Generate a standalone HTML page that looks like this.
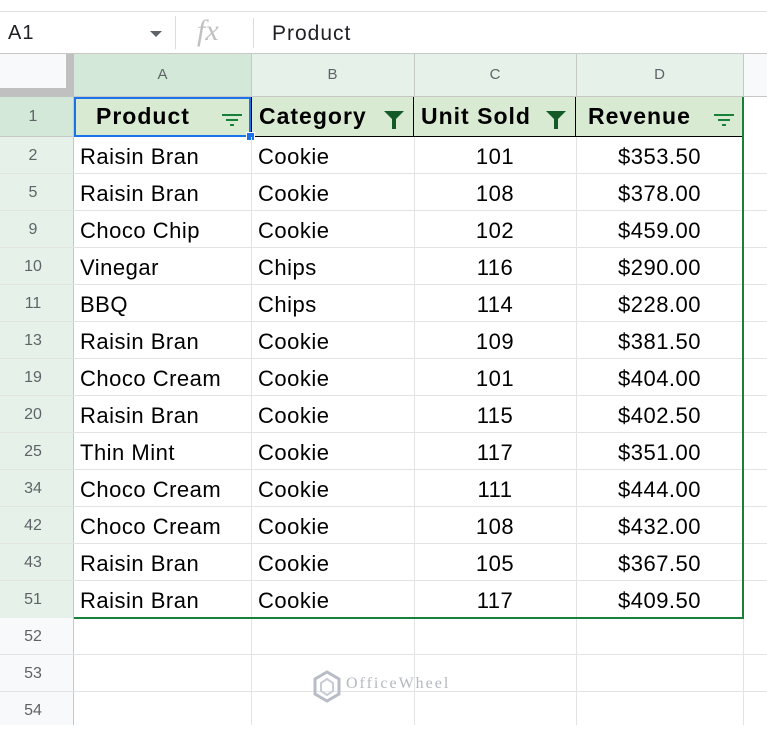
<!DOCTYPE html>
<html><head><meta charset="utf-8"><style>
body{margin:0;width:767px;height:725px;overflow:hidden;background:#fff;font-family:"Liberation Sans",Arial,sans-serif;position:relative}
div{position:absolute;box-sizing:border-box}
.h{height:1px;background:#e2e3e3}
.v{width:1px;background:#e2e3e3}
.t{font-size:22px;color:#000;white-space:nowrap;line-height:37px;letter-spacing:0.5px;margin-top:1px}
.rn{font-size:16px;color:#5f6368;width:66px;text-align:center;line-height:37px}
.cl{font-size:15px;color:#5f6368;text-align:center;top:54px;height:42px;line-height:42px}
.hd{font-size:23px;font-weight:bold;color:#000;line-height:39px;top:97px;letter-spacing:1px}
</style></head><body>
<div class="h" style="left:0;top:11px;width:767px;background:#e0e0e0"></div>
<div style="left:8px;top:13px;font-size:20px;line-height:41px;color:#202124;letter-spacing:1px">A1</div>
<div style="left:150px;top:31px;width:0;height:0;border-left:6px solid transparent;border-right:6px solid transparent;border-top:6px solid #5f6368"></div>
<div class="v" style="left:175px;top:16px;height:33px;background:#dadce0"></div>
<div style="left:197px;top:10px;font-size:30px;line-height:41px;color:#c0c0c0;font-family:'Liberation Serif',serif;font-style:italic">fx</div>
<div class="v" style="left:253px;top:18px;height:30px;background:#dadce0"></div>
<div style="left:272px;top:13px;font-size:21px;line-height:41px;color:#202124;letter-spacing:1px">Product</div>
<div class="h" style="left:0;top:53px;width:767px;background:#c7c7c7"></div>
<div style="left:0;top:54px;width:66px;height:34px;background:#f8f9fa"></div>
<div style="left:66px;top:54px;width:8px;height:43px;background:#c0c0c0"></div>
<div style="left:0;top:88px;width:74px;height:9px;background:#c0c0c0"></div>
<div style="left:74px;top:54px;width:177px;height:42px;background:#d3e8d8"></div>
<div style="left:251px;top:54px;width:492px;height:42px;background:#e6f2e9"></div>
<div style="left:743px;top:54px;width:24px;height:42px;background:#f8f9fa"></div>
<div class="cl" style="left:74px;width:177px">A</div>
<div class="cl" style="left:251px;width:163px">B</div>
<div class="cl" style="left:414px;width:162px">C</div>
<div class="cl" style="left:576px;width:167px">D</div>
<div class="v" style="left:251px;top:54px;height:42px;background:#c7c7c7"></div>
<div class="v" style="left:414px;top:54px;height:42px;background:#c7c7c7"></div>
<div class="v" style="left:576px;top:54px;height:42px;background:#c7c7c7"></div>
<div class="v" style="left:743px;top:54px;height:42px;background:#c7c7c7"></div>
<div class="h" style="left:74px;top:96px;width:693px;background:#c7c7c7"></div>
<div style="left:0;top:97px;width:73px;height:521px;background:#e6f2e9"></div>
<div style="left:0;top:97px;width:73px;height:39px;background:#d3e8d8"></div>
<div style="left:0;top:618px;width:73px;height:107px;background:#f8f9fa"></div>
<div class="v" style="left:73px;top:97px;height:628px;background:#c7c7c7"></div>
<div style="left:74px;top:97px;width:669px;height:39px;background:#d9ead3"></div>
<div class="hd" style="left:96px">Product</div>
<div class="hd" style="left:259px">Category</div>
<div class="hd" style="left:421px">Unit Sold</div>
<div class="hd" style="left:588px">Revenue</div>
<div class="v" style="left:413px;top:97px;height:39px;background:#000"></div>
<div class="v" style="left:575px;top:97px;height:39px;background:#000"></div>
<div class="v" style="left:251px;top:97px;height:39px;background:#000"></div>
<div class="h" style="left:74px;top:136px;width:669px;background:#000"></div>
<div style="left:222px;top:114px;width:20px;height:2px;background:#188038"></div>
<div style="left:226px;top:119px;width:12px;height:2px;background:#188038"></div>
<div style="left:230px;top:124px;width:4px;height:2px;background:#188038"></div>
<div style="left:714px;top:114px;width:20px;height:2px;background:#188038"></div>
<div style="left:718px;top:119px;width:12px;height:2px;background:#188038"></div>
<div style="left:722px;top:124px;width:4px;height:2px;background:#188038"></div>
<svg style="position:absolute;left:384px;top:110px" width="22" height="20"><path d="M0 1H20L12 9V19H8V9Z" fill="#135a26"/></svg>
<svg style="position:absolute;left:546px;top:110px" width="22" height="20"><path d="M0 1H20L12 9V19H8V9Z" fill="#135a26"/></svg>
<div style="left:74px;top:97px;width:177px;height:40px;border:2px solid #1a73e8"></div>
<div style="left:246px;top:132px;width:9px;height:9px;background:#1a73e8;border:1px solid #fff"></div>
<div class="v" style="left:251px;top:137px;height:588px"></div>
<div class="v" style="left:414px;top:137px;height:588px"></div>
<div class="v" style="left:576px;top:137px;height:588px"></div>
<div class="v" style="left:743px;top:618px;height:107px"></div>
<div class="h" style="left:0;top:173px;width:767px"></div>
<div class="h" style="left:0;top:210px;width:767px"></div>
<div class="h" style="left:0;top:247px;width:767px"></div>
<div class="h" style="left:0;top:284px;width:767px"></div>
<div class="h" style="left:0;top:321px;width:767px"></div>
<div class="h" style="left:0;top:358px;width:767px"></div>
<div class="h" style="left:0;top:395px;width:767px"></div>
<div class="h" style="left:0;top:432px;width:767px"></div>
<div class="h" style="left:0;top:469px;width:767px"></div>
<div class="h" style="left:0;top:506px;width:767px"></div>
<div class="h" style="left:0;top:543px;width:767px"></div>
<div class="h" style="left:0;top:580px;width:767px"></div>
<div class="h" style="left:0;top:654px;width:767px"></div>
<div class="h" style="left:0;top:691px;width:767px"></div>
<div class="h" style="left:0;top:136px;width:74px;background:#c7c7c7"></div>
<div style="left:74px;top:136px;width:670px;height:483px;border-right:2px solid #188038;border-bottom:2px solid #188038"></div>
<div style="left:742px;top:97px;width:2px;height:40px;background:#188038"></div>
<div class="rn" style="left:0;top:97px;line-height:39px">1</div>
<div class="rn" style="left:0;top:137px">2</div>
<div class="rn" style="left:0;top:174px">5</div>
<div class="rn" style="left:0;top:211px">9</div>
<div class="rn" style="left:0;top:248px">10</div>
<div class="rn" style="left:0;top:285px">11</div>
<div class="rn" style="left:0;top:322px">13</div>
<div class="rn" style="left:0;top:359px">19</div>
<div class="rn" style="left:0;top:396px">20</div>
<div class="rn" style="left:0;top:433px">25</div>
<div class="rn" style="left:0;top:470px">34</div>
<div class="rn" style="left:0;top:507px">42</div>
<div class="rn" style="left:0;top:544px">43</div>
<div class="rn" style="left:0;top:581px">51</div>
<div class="rn" style="left:0;top:618px">52</div>
<div class="rn" style="left:0;top:655px">53</div>
<div class="rn" style="left:0;top:692px">54</div>
<div class="t" style="left:80px;top:137px">Raisin Bran</div><div class="t" style="left:258px;top:137px">Cookie</div><div class="t" style="left:414px;width:162px;text-align:center;top:137px">101</div><div class="t" style="left:576px;width:167px;text-align:center;top:137px">$353.50</div>
<div class="t" style="left:80px;top:174px">Raisin Bran</div><div class="t" style="left:258px;top:174px">Cookie</div><div class="t" style="left:414px;width:162px;text-align:center;top:174px">108</div><div class="t" style="left:576px;width:167px;text-align:center;top:174px">$378.00</div>
<div class="t" style="left:80px;top:211px">Choco Chip</div><div class="t" style="left:258px;top:211px">Cookie</div><div class="t" style="left:414px;width:162px;text-align:center;top:211px">102</div><div class="t" style="left:576px;width:167px;text-align:center;top:211px">$459.00</div>
<div class="t" style="left:80px;top:248px">Vinegar</div><div class="t" style="left:258px;top:248px">Chips</div><div class="t" style="left:414px;width:162px;text-align:center;top:248px">116</div><div class="t" style="left:576px;width:167px;text-align:center;top:248px">$290.00</div>
<div class="t" style="left:80px;top:285px">BBQ</div><div class="t" style="left:258px;top:285px">Chips</div><div class="t" style="left:414px;width:162px;text-align:center;top:285px">114</div><div class="t" style="left:576px;width:167px;text-align:center;top:285px">$228.00</div>
<div class="t" style="left:80px;top:322px">Raisin Bran</div><div class="t" style="left:258px;top:322px">Cookie</div><div class="t" style="left:414px;width:162px;text-align:center;top:322px">109</div><div class="t" style="left:576px;width:167px;text-align:center;top:322px">$381.50</div>
<div class="t" style="left:80px;top:359px">Choco Cream</div><div class="t" style="left:258px;top:359px">Cookie</div><div class="t" style="left:414px;width:162px;text-align:center;top:359px">101</div><div class="t" style="left:576px;width:167px;text-align:center;top:359px">$404.00</div>
<div class="t" style="left:80px;top:396px">Raisin Bran</div><div class="t" style="left:258px;top:396px">Cookie</div><div class="t" style="left:414px;width:162px;text-align:center;top:396px">115</div><div class="t" style="left:576px;width:167px;text-align:center;top:396px">$402.50</div>
<div class="t" style="left:80px;top:433px">Thin Mint</div><div class="t" style="left:258px;top:433px">Cookie</div><div class="t" style="left:414px;width:162px;text-align:center;top:433px">117</div><div class="t" style="left:576px;width:167px;text-align:center;top:433px">$351.00</div>
<div class="t" style="left:80px;top:470px">Choco Cream</div><div class="t" style="left:258px;top:470px">Cookie</div><div class="t" style="left:414px;width:162px;text-align:center;top:470px">111</div><div class="t" style="left:576px;width:167px;text-align:center;top:470px">$444.00</div>
<div class="t" style="left:80px;top:507px">Choco Cream</div><div class="t" style="left:258px;top:507px">Cookie</div><div class="t" style="left:414px;width:162px;text-align:center;top:507px">108</div><div class="t" style="left:576px;width:167px;text-align:center;top:507px">$432.00</div>
<div class="t" style="left:80px;top:544px">Raisin Bran</div><div class="t" style="left:258px;top:544px">Cookie</div><div class="t" style="left:414px;width:162px;text-align:center;top:544px">105</div><div class="t" style="left:576px;width:167px;text-align:center;top:544px">$367.50</div>
<div class="t" style="left:80px;top:581px">Raisin Bran</div><div class="t" style="left:258px;top:581px">Cookie</div><div class="t" style="left:414px;width:162px;text-align:center;top:581px">117</div><div class="t" style="left:576px;width:167px;text-align:center;top:581px">$409.50</div>
<svg style="position:absolute;left:312px;top:670px" width="30" height="34"><path d="M15 2L27 9V24L15 31L3 24V9Z" fill="none" stroke="#b8bcc6" stroke-width="3"/><path d="M15 9L21 13V21L15 25L9 21V13Z" fill="none" stroke="#c8ccd4" stroke-width="2"/></svg>
<div style="left:346px;top:675px;font-family:'Liberation Serif',serif;font-size:16px;letter-spacing:2px;color:#b5b8c0">OfficeWheel</div>
</body></html>
